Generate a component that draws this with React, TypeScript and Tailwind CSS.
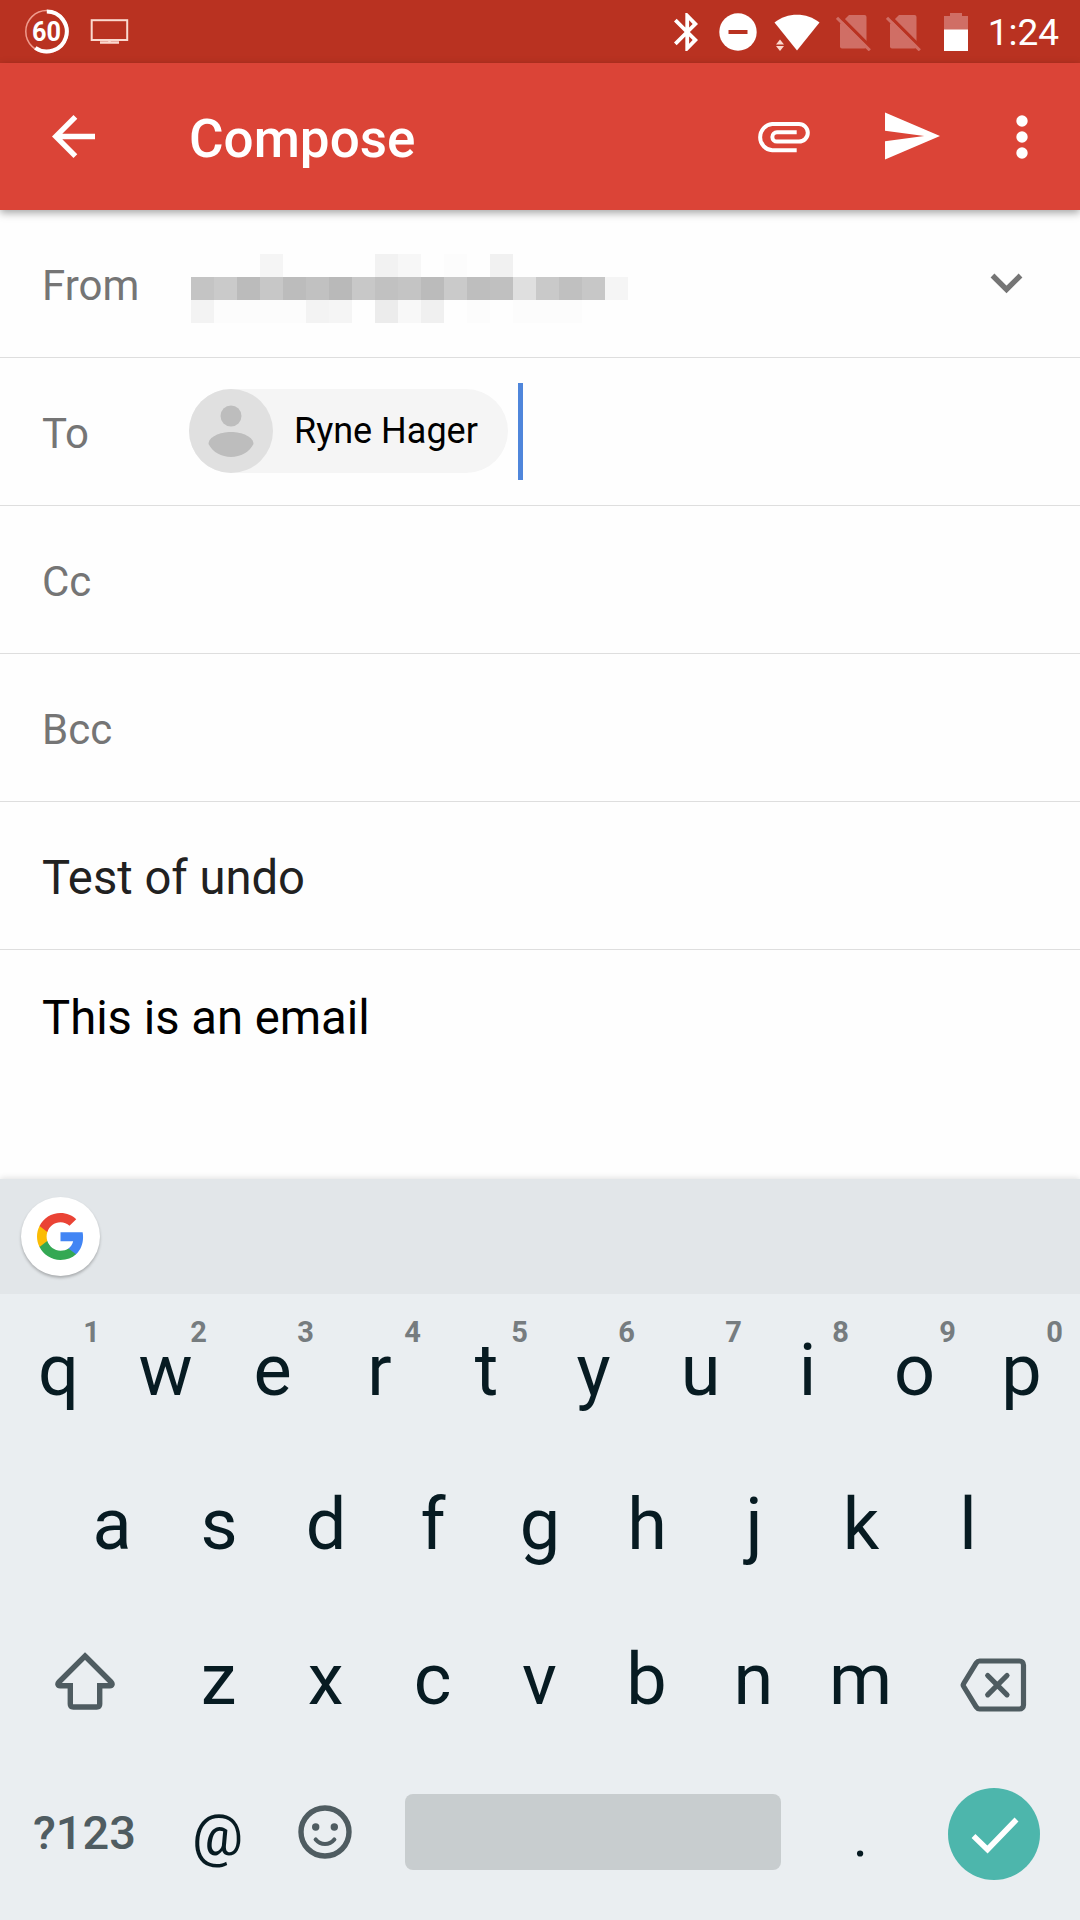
import React from 'react';

interface LetterKey {
    letter: string;
    hint?: string;
}

const TOP_ROW: LetterKey[] = [
    { letter: 'q', hint: '1' },
    { letter: 'w', hint: '2' },
    { letter: 'e', hint: '3' },
    { letter: 'r', hint: '4' },
    { letter: 't', hint: '5' },
    { letter: 'y', hint: '6' },
    { letter: 'u', hint: '7' },
    { letter: 'i', hint: '8' },
    { letter: 'o', hint: '9' },
    { letter: 'p', hint: '0' },
];
const HOME_ROW = ['a', 's', 'd', 'f', 'g', 'h', 'j', 'k', 'l'];
const BOTTOM_ROW = ['z', 'x', 'c', 'v', 'b', 'n', 'm'];

// Shades of the pixelated sender address, one array per row of blocks
const ADDRESS_BLOCKS = [
    ['', '', '', '#f5f5f5', '', '', '', '', '#f2f2f2', '#f7f7f7', '', '#fcfcfc', '', '#f1f1f1', '', '', '', '', ''],
    ['#c4c4c4', '#cacaca', '#bbbbbb', '#c7c7c7', '#bcbcbc', '#c1c1c1', '#b9b9b9', '#c8c8c8', '#c1c1c1', '#c4c4c4', '#bbbbbb', '#cacaca', '#bebebe', '#c0c0c0', '#dfdfdf', '#c9c9c9', '#c0c0c0', '#c7c7c7', '#f5f5f5'],
    ['#f3f3f3', '#fcfcfc', '#fcfcfc', '#fcfcfc', '#fcfcfc', '#f3f3f3', '#f5f5f5', '', '#ececec', '#f8f8f8', '#f0f0f0', '', '#fcfcfc', '', '#fcfcfc', '#fcfcfc', '#fcfcfc', '', ''],
];

const NoSimIcon: React.FC<{ className?: string }> = ({ className }) => (
    <svg className={className} width="36" height="38" viewBox="0 0 36 38">
        <path d="M13 2h15.500a2 2 0 0 1 2 2v29.500a2 2 0 0 1-2 2H6a2 2 0 0 1-2-2V11z" fill="#d06e65" />
        <path d="M3 2.500L36 35.500" stroke="#b93221" strokeWidth="3.200" />
        <path d="M1 4.800L33.800 37.300" stroke="#d06e65" strokeWidth="3" />
    </svg>
);

const StatusBar: React.FC = () => (
    <div className="flex h-[63px] items-center justify-between bg-[#b93221] pl-6 pr-[21px]">
        <div className="flex items-center">
            <svg width="46" height="48" viewBox="0 0 46 48">
                <circle cx="22.800" cy="23.500" r="21" fill="none" stroke="#ef9b8d" strokeWidth="1.500" />
                <path d="M22.800 3.500a20 20 0 1 1-11.500 36.400" fill="none" stroke="#fff" strokeWidth="4" />
                <text x="22.600" y="33.400" textAnchor="middle" fontSize="27" fontWeight="700" textLength="29" lengthAdjust="spacingAndGlyphs" fill="#fff" className="font-['Roboto',sans-serif]">60</text>
            </svg>
            <svg className="ml-5" width="40" height="48" viewBox="0 0 40 48">
                <rect x="1.700" y="12.200" width="35.500" height="19.800" fill="none" stroke="#fbd9cf" strokeWidth="2" />
                <path d="M10 34.500h19M19.500 32v2" stroke="#fbd9cf" strokeWidth="2.500" />
            </svg>
        </div>
        <div className="flex items-center">
            <svg width="24" height="38" viewBox="5 2 12.710 20">
                <path fill="#fff" d="M17.710 7.710L12 2h-1v7.590L6.410 5 5 6.410 10.590 12 5 17.590 6.410 19 11 14.410V22h1l5.710-5.710-4.300-4.290 4.300-4.290zM13 5.830l1.880 1.880L13 9.590V5.830zm1.880 10.460L13 18.170v-3.760l1.880 1.880z" />
            </svg>
            <svg className="ml-[21px]" width="38" height="38" viewBox="0 0 38 38">
                <circle cx="19" cy="19" r="18.700" fill="#fff" />
                <path d="M9.500 19h19" stroke="#b93221" strokeWidth="4" />
            </svg>
            <svg className="ml-[17px]" width="46" height="38" viewBox="0 0 46 38">
                <path d="M.5 9.500C13-1 33-1 45.500 9.500L23 37.500z" fill="#fff" />
                <path d="M6 26.500l4 5H2zM6 38l4-5H2z" fill="#fbd9cf" />
            </svg>
            <NoSimIcon className="ml-[16px]" />
            <NoSimIcon className="ml-[14px]" />
            <svg className="ml-[22px]" width="24" height="38" viewBox="0 0 24 38">
                <path d="M6 0h12v3h6v14H0V3h6z" fill="#d06e65" />
                <path d="M0 16.500h24v21.500H0z" fill="#fff" />
            </svg>
            <span className="ml-[20px] pt-[2px] text-[37px] leading-none text-white">1:24</span>
        </div>
    </div>
);

const AppBar: React.FC = () => (
    <header className="relative z-10 flex h-[147px] items-center bg-[#db4437] pl-[52px] pr-[52px] shadow-[0_3px_8px_rgba(0,0,0,0.35)]">
        <svg width="43" height="43" viewBox="4 4 16 16">
            <path fill="#fff" d="M20 11H7.830l5.590-5.590L12 4l-8 8 8 8 1.410-1.410L7.830 13H20v-2z" />
        </svg>
        <h1 className="ml-[94px] flex-1 pt-[6px] text-[53px] font-medium leading-none text-white">Compose</h1>
        <svg width="54" height="32" viewBox="0 0 54 32" fill="none" stroke="#fff" strokeWidth="4">
            <path d="M39.700 11.300H20a4.600 4.600 0 0 0 0 9.300h22a8.800 8.800 0 0 0 0-17.600H15.200a13.200 13.200 0 0 0 0 26.300h24.500" />
        </svg>
        <svg className="mb-[2px] ml-[74px]" width="55" height="48" viewBox="2 3 21 18">
            <path fill="#fff" d="M2.010 21L23 12 2.010 3 2 10l15 2-15 2z" />
        </svg>
        <svg className="ml-[76px]" width="12" height="44" viewBox="0 0 12 44" fill="#fff">
            <circle cx="6" cy="6" r="5.700" />
            <circle cx="6" cy="22" r="5.700" />
            <circle cx="6" cy="38" r="5.700" />
        </svg>
    </header>
);

const Field: React.FC<{ label: string; children?: React.ReactNode }> = ({ label, children }) => (
    <div className="flex h-[148px] items-center border-b border-[#dedede] pl-[42px] pr-[57px]">
        <span className="w-[147px] pt-[4px] text-[42px] leading-none text-[#757575]">{label}</span>
        {children}
    </div>
);

const RecipientChip: React.FC = () => (
    <div className="mb-[2px] flex h-[84px] w-[319px] items-center rounded-full bg-[#f5f5f5]">
        <svg width="84" height="84" viewBox="0 0 84 84">
            <circle cx="42" cy="42" r="42" fill="#e0e0e0" />
            <circle cx="42" cy="27" r="10.500" fill="#bdbdbd" />
            <path d="M19.500 55c0-7 11-12 22.500-12s22.500 5 22.500 12c-4 8-13 13-22.500 13s-18.500-5-22.500-13z" fill="#bdbdbd" />
        </svg>
        <span className="ml-[21px] whitespace-nowrap text-[36px] leading-none text-black">Ryne Hager</span>
    </div>
);

const Key: React.FC<LetterKey> = ({ letter, hint }) => (
    <div className="relative flex h-full w-[107px] items-center justify-center pb-[1px]">
        <span className="text-[72px] leading-none text-[#071b22]">{letter}</span>
        {hint && <span className="absolute right-[12px] top-[24px] text-[29px] font-bold leading-none text-[#767c7f]">{hint}</span>}
    </div>
);

const Keyboard: React.FC = () => (
    <div className="relative flex h-[741px] flex-col bg-[#eaeef1] shadow-[0_-1px_6px_rgba(0,0,0,0.12)]">
        <div className="flex h-[115px] items-center bg-[#e2e6e9] pl-[21px]">
            <div className="flex size-[79px] items-center justify-center rounded-full bg-white shadow-[0_2px_3px_rgba(0,0,0,0.25)]">
                <svg width="47" height="47" viewBox="1 1 22 22">
                    <path fill="#4285f4" d="M22.560 12.250c0-.78-.07-1.530-.2-2.250H12v4.260h5.920c-.26 1.370-1.040 2.530-2.210 3.310v2.770h3.570c2.080-1.920 3.280-4.740 3.280-8.090z" />
                    <path fill="#34a853" d="M12 23c2.970 0 5.460-.98 7.280-2.660l-3.570-2.770c-.98.66-2.230 1.060-3.710 1.060-2.860 0-5.290-1.930-6.160-4.530H2.180v2.840C3.990 20.530 7.700 23 12 23z" />
                    <path fill="#fbbc05" d="M5.840 14.090c-.22-.66-.35-1.360-.35-2.090s.13-1.430.35-2.090V7.070H2.180C1.430 8.550 1 10.220 1 12s.43 3.450 1.180 4.930l2.850-2.220.81-.62z" />
                    <path fill="#ea4335" d="M12 5.380c1.620 0 3.060.56 4.210 1.640l3.150-3.150C17.450 2.090 14.970 1 12 1 7.700 1 3.990 3.470 2.180 7.070l3.660 2.840c.87-2.600 3.300-4.530 6.160-4.530z" />
                </svg>
            </div>
        </div>

        <div className="flex h-[154.5px] justify-center">
            {TOP_ROW.map(key => <Key key={key.letter} letter={key.letter} hint={key.hint} />)}
        </div>
        <div className="flex h-[154.5px] justify-center">
            {HOME_ROW.map(letter => <Key key={letter} letter={letter} />)}
        </div>
        <div className="flex h-[154.5px] items-center px-[5px]">
            <div className="flex w-[160px] justify-center pt-[2px]">
                <svg width="60" height="58" viewBox="0 0 60 58" fill="none" stroke="#4f5c61" strokeWidth="5.400">
                    <path d="M30 4L56 30c2 2 1 3.800-1 3.800H44.700V52c0 2-1 3-3 3H18.300c-2 0-3-1-3-3V33.800H5c-2 0-3-1.800-1-3.800z" />
                </svg>
            </div>
            {BOTTOM_ROW.map(letter => <Key key={letter} letter={letter} />)}
            <div className="flex w-[160px] justify-center pr-[2px] pt-[9px]">
                <svg width="68" height="54" viewBox="0 0 68 54" fill="none" stroke="#4f5c61" strokeWidth="5.200" strokeLinecap="round">
                    <path d="M20.500 3h40a4 4 0 0 1 4 4v40a4 4 0 0 1-4 4h-40c-1.500 0-2.500-1-3.200-2L5 29c-1.200-2-1.200-2 0-4L17.300 5c.7-1 1.700-2 3.200-2z" />
                    <path d="M28.700 17.500l19.300 19.300M48 17.500L28.700 36.800" />
                </svg>
            </div>
        </div>
        <div className="flex h-[154.5px] items-center px-[5px]">
            <div className="w-[159px] pb-1 text-center text-[47px] font-medium leading-none text-[#4f5c61]">?123</div>
            <div className="w-[107px] pt-[2px] text-center text-[57px] leading-none text-[#071b22]">@</div>
            <div className="flex w-[107px] justify-center pb-[6px]">
                <svg width="54" height="54" viewBox="0 0 54 54">
                    <circle cx="27" cy="27" r="24" fill="none" stroke="#4f5c61" strokeWidth="5.400" />
                    <circle cx="17.700" cy="22" r="3.700" fill="#4f5c61" />
                    <circle cx="36.300" cy="22" r="3.700" fill="#4f5c61" />
                    <path d="M17.700 34.500c5 6 13.600 6 18.600 0" fill="none" stroke="#4f5c61" strokeWidth="4.200" strokeLinecap="round" />
                </svg>
            </div>
            <div className="mb-[5px] ml-[27px] mr-[26px] h-[76px] w-[376px] rounded-[8px] bg-[#c8cdcf]" />
            <div className="w-[107px] pt-[5px] text-center text-[56px] leading-none text-[#071b22]">.</div>
            <div className="flex flex-1 justify-center pb-[2px] pr-[2px]">
                <div className="flex size-[92px] items-center justify-center rounded-full bg-[#4db6ac]">
                    <svg width="50" height="40" viewBox="0 0 50 40" fill="none" stroke="#fff" strokeWidth="5.500">
                        <path d="M4.500 22l14 13.500L47.500 5.500" />
                    </svg>
                </div>
            </div>
        </div>
    </div>
);

const App: React.FC = () => (
    <div className="flex h-[1920px] w-[1080px] flex-col overflow-hidden bg-[#fefefe] font-['Roboto','Noto_Sans',sans-serif]">
        <StatusBar />
        <AppBar />
        <main className="flex-1">
            <Field label="From">
                <div className="ml-[2px] flex-1 pt-[10px]">
                    {ADDRESS_BLOCKS.map((row, y) => (
                        <div key={y} className="flex h-[23px]">
                            {row.map((shade, x) => (
                                <div key={x} className="size-[23px]" style={{ backgroundColor: shade || undefined }} />
                            ))}
                        </div>
                    ))}
                </div>
                <svg width="33" height="21" viewBox="0 0 33 21" fill="none" stroke="#757575" strokeWidth="5.400">
                    <path d="M2.500 2.500l14 14 14-14" />
                </svg>
            </Field>
            <Field label="To">
                <RecipientChip />
                <div className="ml-[10px] h-[97px] w-[5px] bg-[#4f86db]" />
            </Field>
            <Field label="Cc" />
            <Field label="Bcc" />
            <div className="flex h-[148px] items-center border-b border-[#dedede] pl-[42px] pt-[6px] text-[47.2px] leading-none text-[#212121]">Test of undo</div>
            <div className="pl-[42px] pt-[45px] text-[47.2px] leading-none text-black">This is an email</div>
        </main>
        <Keyboard />
    </div>
);

export default App;
